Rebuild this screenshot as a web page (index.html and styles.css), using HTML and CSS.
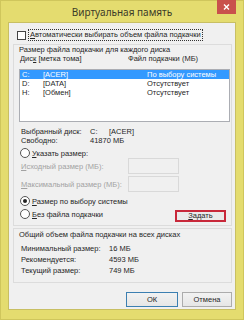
FILE: index.html
```
<!DOCTYPE html>
<html lang="ru">
<head>
    <meta charset="UTF-8">
    <title>Виртуальная память</title>
    <link rel="stylesheet" href="styles.css">
</head>
<body>
    <div class="window">
        <div class="titlebar">
            <span class="title">Виртуальная память</span>
            <span class="close">
                <svg width="19" height="14" viewBox="0 0 19 14">
                    <path d="M7 4.5 L12 9.5 M12 4.5 L7 9.5" stroke="#fff" stroke-width="1.4"/>
                </svg>
            </span>
        </div>
        <div class="content">
            <div class="auto">
                <span class="checkbox"></span>
                <span class="focus"><u>А</u>втоматически выбирать объем файла подкачки</span>
            </div>

            <div class="group disks">
                <div class="group-title">Размер файла подкачки для каждого диска</div>
                <div class="cols">
                    <span class="col-disk">Дис<u>к</u> [метка тома]</span>
                    <span class="col-size">Файл подкачки (МБ)</span>
                </div>
                <div class="list">
                    <div class="row selected"><span>C:</span><span>[ACER]</span><span>По выбору системы</span></div>
                    <div class="row"><span>D:</span><span>[DATA]</span><span>Отсутствует</span></div>
                    <div class="row"><span>H:</span><span>[Обмен]</span><span>Отсутствует</span></div>
                </div>
                <div class="info">
                    <span class="info-label">Выбранный диск:</span><span class="drive">C:</span><span>[ACER]</span>
                </div>
                <div class="info">
                    <span class="info-label">Свободно:</span><span>41870 МБ</span>
                </div>
                <div class="radio-row first">
                    <span class="radio"></span><span><u>У</u>казать размер:</span>
                </div>
                <div class="field">
                    <span class="field-label"><u>И</u>сходный размер (МБ):</span>
                    <span class="input"></span>
                </div>
                <div class="field">
                    <span class="field-label"><u>М</u>аксимальный размер (МБ):</span>
                    <span class="input"></span>
                </div>
                <div class="radio-row system">
                    <span class="radio checked"></span><span><u>Р</u>азмер по выбору системы</span>
                </div>
                <div class="last-row">
                    <div class="radio-row">
                        <span class="radio"></span><span><u>Б</u>ез файла подкачки</span>
                    </div>
                    <span class="set-wrap"><button class="btn set"><u>З</u>адать</button></span>
                </div>
            </div>

            <div class="group total">
                <div class="group-title">Общий объем файла подкачки на всех дисках</div>
                <div class="stat"><span class="stat-label">Минимальный размер:</span><span>16 МБ</span></div>
                <div class="stat"><span class="stat-label">Рекомендуется:</span><span>4593 МБ</span></div>
                <div class="stat"><span class="stat-label">Текущий размер:</span><span>749 МБ</span></div>
            </div>

            <div class="buttons">
                <button class="btn ok">ОК</button>
                <button class="btn cancel">Отмена</button>
            </div>
        </div>
    </div>
</body>
</html>
```

FILE: styles.css
```
body {
    margin: 0;
    font-family: 'Liberation Sans', Arial, sans-serif;
    font-size: 7.5px;
    color: #262626;
    white-space: nowrap;
}

u {
    text-decoration: underline;
    text-underline-offset: 1px;
}

.window {
    width: 244px;
    height: 320px;
    box-sizing: border-box;
    background: #e4dc6f;
    border: 1px solid #cfc65c;
    padding: 0 7px 9px 7px;
    display: flex;
    flex-direction: column;
}

.titlebar {
    height: 21px;
    position: relative;
    display: flex;
    justify-content: center;
    align-items: center;
}

.title {
    font-family: 'Noto Sans', sans-serif;
    font-size: 10px;
    color: #3b3a28;
}

.close {
    position: absolute;
    top: -1px;
    right: 0;
    width: 19px;
    height: 14px;
    background: #c9514c;
}

.close svg {
    display: block;
}

.content {
    flex: 1;
    background: #f0f0f0;
    border: 1px solid #c8bf63;
    display: flex;
    flex-direction: column;
}

/* checkbox row */
.auto {
    display: flex;
    align-items: center;
    margin: 6px 0 0 8px;
    height: 12px;
}

.checkbox {
    width: 7px;
    height: 7px;
    border: 1px solid #444;
    background: #fff;
    margin-right: 2px;
}

.focus {
    border: 1px dotted #333;
    padding: 0 1px;
    line-height: 10px;
}

/* group boxes */
.group {
    border: 1px solid #dcdcdc;
    margin: 0 3px 0 4px;
    padding: 0 0 0 7px;
    display: flex;
    flex-direction: column;
}

.disks {
    margin-top: 3px;
    height: 182px;
    box-sizing: border-box;
}

.group-title {
    height: 9px;
    line-height: 9px;
    margin-left: -2px;
}

.cols {
    height: 9px;
    line-height: 9px;
    display: flex;
    margin-left: -1px;
}

.col-disk {
    width: 108px;
}

.list {
    margin: 6px 0 0 -2px;
    width: 211px;
    height: 53px;
    box-sizing: border-box;
    background: #fff;
    border: 1px solid #abadb3;
}

.row {
    display: grid;
    grid-template-columns: 21px 104px 1fr;
    height: 9px;
    line-height: 9px;
    padding-left: 2px;
}

.row.selected {
    background: #3399ff;
    color: #fff;
}

.info {
    display: flex;
    height: 9px;
    line-height: 9px;
}

.list + .info {
    margin-top: 5px;
}

.info-label {
    width: 69px;
}

.drive {
    width: 19px;
}

.radio-row {
    display: flex;
    align-items: center;
    height: 10px;
    margin-left: -1px;
}

.radio-row.first {
    margin-top: 3px;
}

.radio {
    width: 8px;
    height: 8px;
    border: 1px solid #555;
    border-radius: 50%;
    background: #fff;
    margin-right: 2px;
    position: relative;
}

.radio.checked::after {
    content: '';
    position: absolute;
    left: 2px;
    top: 2px;
    width: 4px;
    height: 4px;
    border-radius: 50%;
    background: #222;
}

.field {
    display: flex;
    align-items: center;
    height: 16px;
    color: #a2a2a2;
}

.field + .field {
    margin-top: 2px;
}

.field-label {
    width: 107px;
}

.input {
    width: 49px;
    height: 14px;
    border: 1px solid #d9d9d9;
    background: #f0f0f0;
}

.radio-row.system {
    margin-top: 4px;
}

.last-row {
    display: flex;
    justify-content: space-between;
    align-items: flex-start;
    margin-top: 3px;
}

.set-wrap {
    margin: 1px 5px 0 0;
    border: 2px solid #c8283a;
    display: flex;
}

/* buttons */
.btn {
    font-family: inherit;
    font-size: 7.5px;
    color: #262626;
    background: linear-gradient(#f2f2f2, #e6e6e6);
    border: 1px solid #acacac;
    padding: 0;
    margin: 0;
}

.set {
    width: 47px;
    height: 8px;
    line-height: 8px;
    border: none;
    background: #eaeaea;
}

.total {
    margin-top: 2px;
    height: 55px;
    box-sizing: border-box;
}

.total .group-title {
    margin-top: 1px;
}

.stat {
    display: flex;
    height: 11px;
    line-height: 11px;
}

.total .group-title + .stat {
    margin-top: 4px;
}

.stat-label {
    width: 88px;
}

.buttons {
    display: flex;
    justify-content: flex-end;
    gap: 4px;
    margin: 9px 3px 0 0;
}

.buttons .btn {
    height: 15px;
}

.ok {
    width: 52px;
    border-color: #3c7fb1;
}

.cancel {
    width: 50px;
}
```
